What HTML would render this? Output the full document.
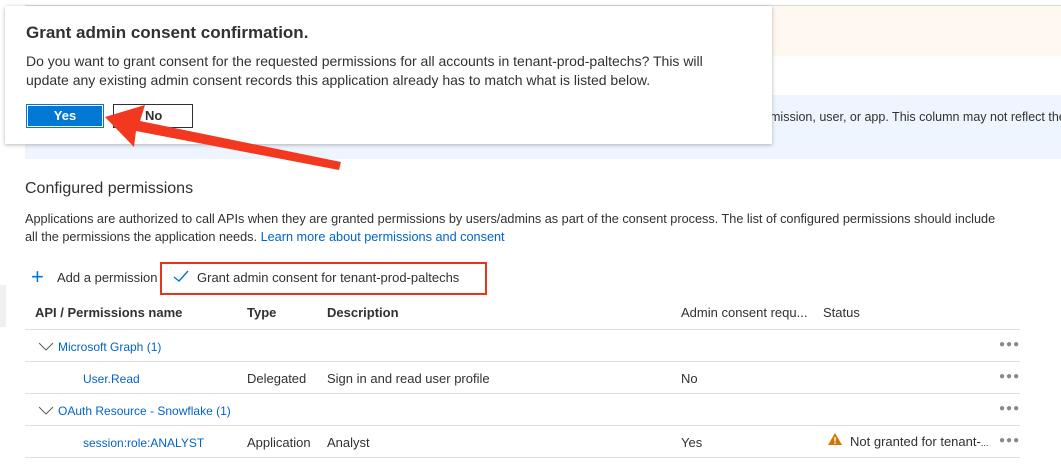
<!DOCTYPE html>
<html><head><style>
body{margin:0;width:1061px;height:472px;overflow:hidden;background:#fff;font-family:"Liberation Sans",sans-serif;color:#323130;position:relative}
.a{position:absolute;white-space:nowrap}
.lnk{color:#0064c8}
.hl{position:absolute;left:25px;width:995px;height:1px;background:#e1dfdd}
.dots{position:absolute;left:999px;font-size:10px;letter-spacing:1px;color:#8a8886}
</style></head><body>
<div style="position:absolute;left:25px;top:5px;width:1036px;height:1px;background:#d8d8d8"></div>
<div style="position:absolute;left:25px;top:6px;width:1036px;height:50px;background:#fff8f1"></div>
<div style="position:absolute;left:25px;top:95px;width:1036px;height:64px;background:#eff5fe"></div>
<div class="a" style="left:770px;top:110px;font-size:12.5px">mission, user, or app. This column may not reflect the v</div>

<div style="position:absolute;left:0;top:285px;width:6px;height:42px;background:#f0f0f0"></div>

<div class="a" style="left:25px;top:180px;font-size:16px">Configured permissions</div>
<div class="a" style="left:25px;top:210px;font-size:12.7px;line-height:18px">Applications are authorized to call APIs when they are granted permissions by users/admins as part of the consent process. The list of configured permissions should include<br>all the permissions the application needs. <span class="lnk">Learn more about permissions and consent</span></div>

<div class="a" style="left:31px;top:264px;font-size:22px;color:#0078d4;font-weight:300">+</div>
<div class="a" style="left:57px;top:270px;font-size:13px">Add a permission</div>
<div style="position:absolute;left:160px;top:262px;width:323px;height:29px;border:2px solid #e8341c"></div>
<svg style="position:absolute;left:172px;top:268px" width="18" height="16"><path d="M2 9 L7 13 L16 3" fill="none" stroke="#0078d4" stroke-width="1.4"/></svg>
<div class="a" style="left:197px;top:270px;font-size:13px">Grant admin consent for tenant-prod-paltechs</div>

<div class="a" style="left:35px;top:305px;font-size:13px;font-weight:bold;color:#323130">API / Permissions name</div>
<div class="a" style="left:247px;top:305px;font-size:13px;font-weight:bold">Type</div>
<div class="a" style="left:327px;top:305px;font-size:13px;font-weight:bold">Description</div>
<div class="a" style="left:681px;top:305px;font-size:13px">Admin consent requ...</div>
<div class="a" style="left:823px;top:305px;font-size:13px">Status</div>
<div class="hl" style="top:329px"></div>

<svg style="position:absolute;left:38px;top:342px" width="18" height="10"><path d="M1 1 L8 8 L15 1" fill="none" stroke="#605e5c" stroke-width="1"/></svg>
<div class="a lnk" style="left:58px;top:340px;font-size:12px">Microsoft Graph (1)</div>
<div class="dots" style="top:339px">●●●</div>
<div class="hl" style="top:361px"></div>

<div class="a lnk" style="left:83px;top:372px;font-size:12px">User.Read</div>
<div class="a" style="left:247px;top:371px;font-size:13px">Delegated</div>
<div class="a" style="left:327px;top:371px;font-size:13px">Sign in and read user profile</div>
<div class="a" style="left:681px;top:371px;font-size:13px">No</div>
<div class="dots" style="top:371px">●●●</div>
<div class="hl" style="top:393px"></div>

<svg style="position:absolute;left:38px;top:406px" width="18" height="10"><path d="M1 1 L8 8 L15 1" fill="none" stroke="#605e5c" stroke-width="1"/></svg>
<div class="a lnk" style="left:58px;top:404px;font-size:12px">OAuth Resource - Snowflake (1)</div>
<div class="dots" style="top:403px">●●●</div>
<div class="hl" style="top:425px"></div>

<div class="a lnk" style="left:83px;top:436px;font-size:12px">session:role:ANALYST</div>
<div class="a" style="left:247px;top:435px;font-size:13px">Application</div>
<div class="a" style="left:327px;top:435px;font-size:13px">Analyst</div>
<div class="a" style="left:681px;top:435px;font-size:13px">Yes</div>
<svg style="position:absolute;left:827px;top:432px" width="16" height="14"><path d="M8 1 L15 13 L1 13 Z" fill="#d47500"/><rect x="7.3" y="5" width="1.4" height="4.5" fill="#fff"/><rect x="7.3" y="10.5" width="1.4" height="1.4" fill="#fff"/></svg>
<div class="a" style="left:850px;top:434px;font-size:13px">Not granted for tenant-<span style="font-size:9px">...</span></div>
<div class="dots" style="top:435px">●●●</div>
<div class="hl" style="top:457px"></div>

<div style="position:absolute;left:5px;top:6px;width:767px;height:138px;background:#fff;box-shadow:0 1px 4px rgba(0,0,0,.28)">
<div class="a" style="left:21px;top:17px;font-size:17px;font-weight:bold;color:#323130">Grant admin consent confirmation.</div>
<div class="a" style="left:21px;top:46px;font-size:14px;line-height:19px">Do you want to grant consent for the requested permissions for all accounts in tenant-prod-paltechs? This will<br>update any existing admin consent records this application already has to match what is listed below.</div>
<div style="position:absolute;left:21px;top:98px;width:78px;height:24px;background:#0078d4;box-shadow:inset 0 0 0 1px #0078d4,inset 0 0 0 2px #fff;color:#fff;font-size:13px;font-weight:bold;text-align:center;line-height:24px">Yes</div>
<div style="position:absolute;left:108px;top:98px;width:78px;height:22px;border:1px solid #323130;font-size:13px;font-weight:bold;line-height:22px"><span style="position:absolute;left:31px">No</span></div>
</div>

<svg style="position:absolute;left:0;top:0" width="1061" height="472"><polygon points="105,117 145,105 140,121 341,162 339,170 136,131 134,147" fill="#f2391f"/></svg>
</body></html>
